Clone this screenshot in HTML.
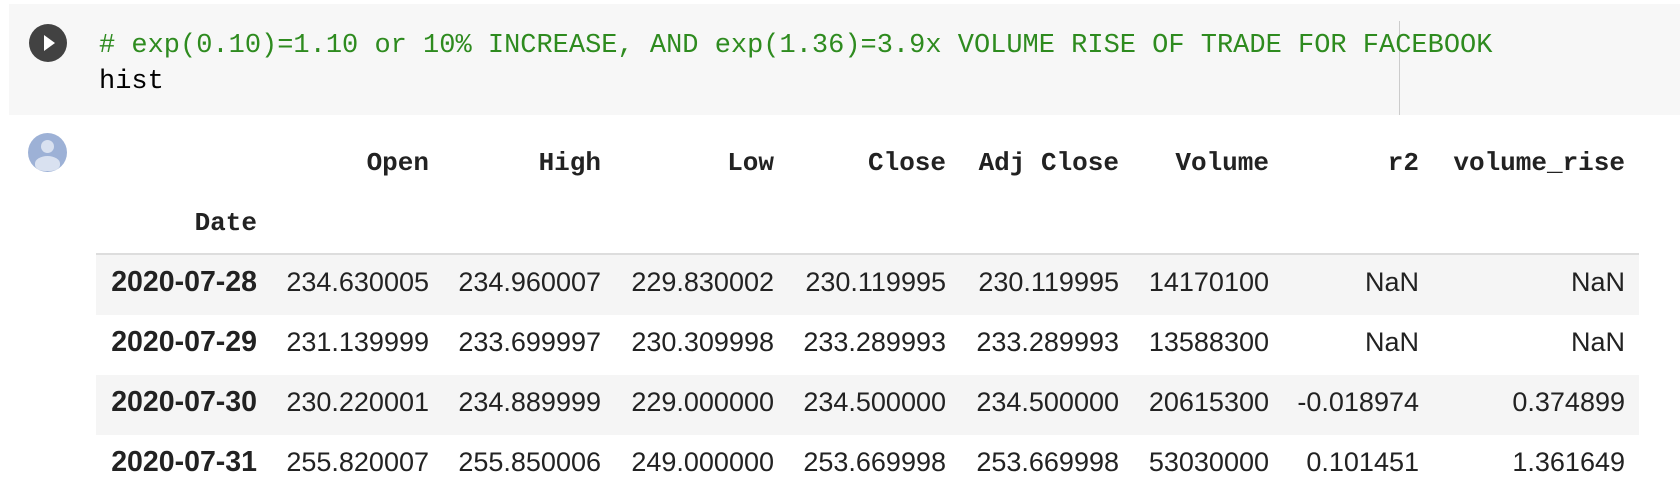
<!DOCTYPE html>
<html><head><style>
body{margin:0;width:1680px;height:499px;background:#fff;position:relative;overflow:hidden;font-family:"Liberation Sans",sans-serif;}
.code{position:absolute;left:9px;top:4px;width:1671px;height:111px;background:#f7f7f7;}
.vl{position:absolute;left:1399px;top:21px;width:1px;height:94px;background:#ccc;}
.play{position:absolute;left:29px;top:24px;width:38px;height:38px;border-radius:50%;background:#424242;}
.play:after{content:"";position:absolute;left:15px;top:11px;border-left:11px solid #fff;border-top:8px solid transparent;border-bottom:8px solid transparent;}
pre{position:absolute;left:99px;top:28px;margin:0;font:27px/36px "Liberation Mono",monospace;color:#000;}
.c{color:#2e8b1f;}
.av{position:absolute;left:28px;top:133px;width:39px;height:39px;border-radius:50%;background:#9db1d6;overflow:hidden;}
.av:before{content:"";position:absolute;left:13px;top:7px;width:13px;height:13px;border-radius:50%;background:#d9e1f0;}
.av:after{content:"";position:absolute;left:7px;top:23px;width:25px;height:15px;border-radius:50% 50% 40% 40%;background:#d9e1f0;}
.h{position:absolute;font:bold 26px "Liberation Mono",monospace;color:#222;}
.row{position:absolute;left:96px;width:1543px;height:60px;}
.s{background:#f5f5f5;}
.t{position:absolute;font-size:27px;color:#222;text-align:right;}
.d{font-weight:bold;font-size:28.5px;}
</style></head><body>
<div class="code"></div><div class="vl"></div><div class="play"></div>
<pre><span class="c"># exp(0.10)=1.10 or 10% INCREASE, AND exp(1.36)=3.9x VOLUME RISE OF TRADE FOR FACEBOOK</span>
hist</pre>
<div class="av"></div>
<div style="position:absolute;left:96px;top:253px;width:1543px;height:2px;background:#ddd"></div>
<div class="row s" style="top:255px"></div>
<div class="row s" style="top:375px"></div>
<div id="c"></div>
<script>
var rights=[429,601,774,946,1119,1269,1419,1625];
var heads=["Open","High","Low","Close","Adj Close","Volume","r2","volume_rise"];
var rows=[["2020-07-28","234.630005","234.960007","229.830002","230.119995","230.119995","14170100","NaN","NaN"],
["2020-07-29","231.139999","233.699997","230.309998","233.289993","233.289993","13588300","NaN","NaN"],
["2020-07-30","230.220001","234.889999","229.000000","234.500000","234.500000","20615300","-0.018974","0.374899"],
["2020-07-31","255.820007","255.850006","249.000000","253.669998","253.669998","53030000","0.101451","1.361649"]];
var h="";
heads.forEach(function(t,i){h+='<div class="h" style="right:'+(1680-rights[i])+'px;top:148px;white-space:pre">'+t+'</div>';});
h+='<div class="h" style="right:1423px;top:208px">Date</div>';
var tops=[267,327,387,447];
rows.forEach(function(r,j){
 h+='<div class="t d" style="right:1423px;top:'+(tops[j]-1)+'px">'+r[0]+'</div>';
 for(var i=1;i<9;i++)h+='<div class="t" style="right:'+(1680-rights[i-1])+'px;top:'+tops[j]+'px">'+r[i]+'</div>';
});
document.getElementById("c").innerHTML=h;
</script>
</body></html>
